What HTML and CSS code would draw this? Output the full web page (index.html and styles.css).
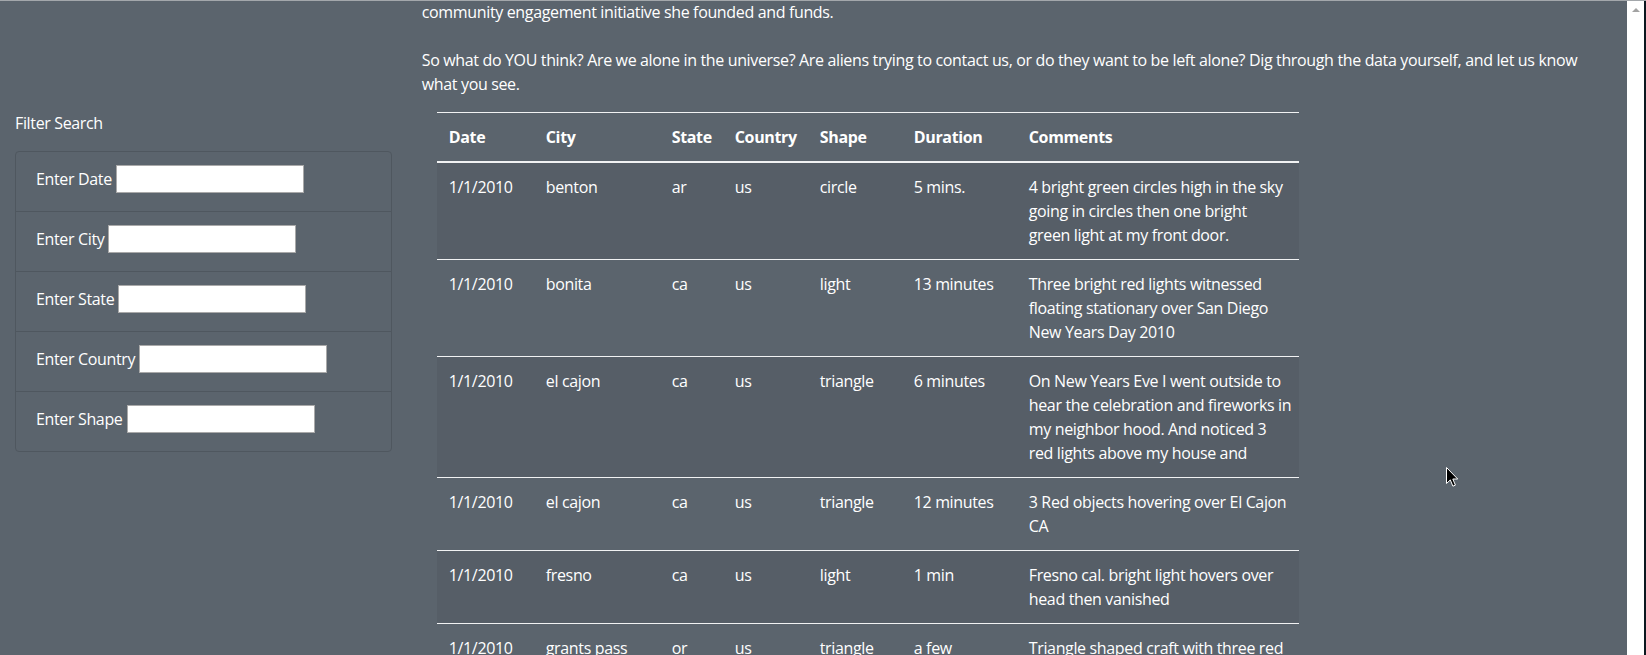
FILE: index.html
```html
<!DOCTYPE html>
<html lang="en">
<head>
<meta charset="utf-8">
<title>UFO Sightings</title>
<link rel="stylesheet" href="styles.css">
</head>
<body>
<div class="frame">
  <div class="viewport">
    <div class="layout">
      <aside class="filters">
        <p class="filters-title">Filter Search</p>
        <ul class="filter-list">
          <li class="filter-item"><label for="datetime">Enter Date</label><input id="datetime" type="text"></li>
          <li class="filter-item"><label for="city">Enter City</label><input id="city" type="text"></li>
          <li class="filter-item"><label for="state">Enter State</label><input id="state" type="text"></li>
          <li class="filter-item"><label for="country">Enter Country</label><input id="country" type="text"></li>
          <li class="filter-item"><label for="shape">Enter Shape</label><input id="shape" type="text"></li>
        </ul>
      </aside>
      <main class="content">
        <p class="intro">community engagement initiative she founded and funds.<br><br>So what do YOU think? Are we alone in the universe? Are aliens trying to contact us, or do they want to be left alone? Dig through the data yourself, and let us know what you see.</p>
        <table class="ufo-table">
          <colgroup>
            <col class="col-date">
            <col class="col-city">
            <col class="col-state">
            <col class="col-country">
            <col class="col-shape">
            <col class="col-duration">
            <col class="col-comments">
          </colgroup>
          <thead>
            <tr>
              <th>Date</th>
              <th>City</th>
              <th>State</th>
              <th>Country</th>
              <th>Shape</th>
              <th>Duration</th>
              <th>Comments</th>
            </tr>
          </thead>
          <tbody>
            <tr>
              <td>1/1/2010</td><td>benton</td><td>ar</td><td>us</td><td>circle</td><td>5 mins.</td>
              <td>4 bright green circles high in the sky<br>going in circles then one bright<br>green light at my front door.</td>
            </tr>
            <tr>
              <td>1/1/2010</td><td>bonita</td><td>ca</td><td>us</td><td>light</td><td>13 minutes</td>
              <td>Three bright red lights witnessed<br>floating stationary over San Diego<br>New Years Day 2010</td>
            </tr>
            <tr>
              <td>1/1/2010</td><td>el cajon</td><td>ca</td><td>us</td><td>triangle</td><td>6 minutes</td>
              <td>On New Years Eve I went outside to<br>hear the celebration and fireworks in<br>my neighbor hood. And noticed 3<br>red lights above my house and</td>
            </tr>
            <tr>
              <td>1/1/2010</td><td>el cajon</td><td>ca</td><td>us</td><td>triangle</td><td>12 minutes</td>
              <td>3 Red objects hovering over El Cajon<br>CA</td>
            </tr>
            <tr>
              <td>1/1/2010</td><td>fresno</td><td>ca</td><td>us</td><td>light</td><td>1 min</td>
              <td>Fresno cal. bright light hovers over<br>head then vanished</td>
            </tr>
            <tr>
              <td>1/1/2010</td><td>grants pass</td><td>or</td><td>us</td><td>triangle</td><td>a few minutes</td>
              <td>Triangle shaped craft with three red<br>lights</td>
            </tr>
          </tbody>
        </table>
      </main>
    </div>
    <svg class="cursor" width="13" height="21" viewBox="0 0 13 21" aria-hidden="true">
      <path d="M0.5 0.5 L0.5 16.5 L4.3 12.9 L6.9 19.2 L9.4 18.1 L6.8 12 L11.7 12 Z" fill="#000" stroke="#fff" stroke-width="1" stroke-linejoin="miter"/>
    </svg>
  </div>
  <div class="scrollbar"><span class="scroll-up"></span></div>
  <div class="edge"></div>
</div>
</body>
</html>
```
FILE: styles.css
```css
html, body {
  margin: 0;
  height: 100%;
}

body {
  background: #5b646d;
  color: #ffffff;
  font-family: "Open Sans", "Noto Sans", "Liberation Sans", sans-serif;
  font-size: 16px;
  line-height: 24px;
  letter-spacing: -0.35px;
  overflow: hidden;
}

.frame {
  position: relative;
  display: flex;
  height: 655px;
}

.frame::before {
  content: "";
  position: absolute;
  left: 0;
  right: 0;
  top: 0;
  height: 1px;
  background: #a3a7ab;
  z-index: 2;
}

.viewport {
  position: relative;
  flex: 1;
  overflow: hidden;
}

.layout {
  display: grid;
  grid-template-columns: 1fr 3fr;
}

.filters {
  padding: 111px 15px 0;
}

.filters-title {
  margin: 0 0 16px;
}

.filter-list {
  list-style: none;
  margin: 0;
  padding: 0;
  border: 1px solid #4f575f;
  border-radius: 4px;
}

.filter-item {
  box-sizing: border-box;
  height: 60px;
  padding: 13px 20px 0;
  display: flex;
  align-items: flex-start;
  column-gap: 4px;
  border-bottom: 1px solid #4f575f;
}

.filter-item:last-child {
  height: 59px;
  border-bottom: 0;
}

.filter-item label {
  line-height: 28px;
}

.filter-item input {
  box-sizing: border-box;
  width: 188px;
  height: 28px;
  margin: 0;
  padding: 1px 3px;
  border: 1px solid #a9a9a9;
  background: #ffffff;
  font: inherit;
}

.content {
  padding: 0 15px;
}

.intro {
  margin: 0 0 16px;
}

.ufo-table {
  width: 862px;
  margin-left: 15px;
  border-collapse: collapse;
  table-layout: fixed;
}

.col-date { width: 97px; }
.col-city { width: 126px; }
.col-state { width: 63px; }
.col-country { width: 85px; }
.col-shape { width: 94px; }
.col-duration { width: 115px; }
.col-comments { width: 282px; }

.ufo-table th,
.ufo-table td {
  padding: 12px;
  text-align: left;
  vertical-align: top;
  border-top: 1px solid #f1f2f3;
}

.ufo-table td:last-child {
  white-space: nowrap;
}

.ufo-table thead th {
  vertical-align: bottom;
  font-weight: 700;
  border-bottom: 2px solid #f1f2f3;
}

.ufo-table tbody tr:nth-child(odd) {
  background: rgba(0, 0, 0, 0.05);
}

.cursor {
  position: absolute;
  left: 1446px;
  top: 467px;
}

.scrollbar {
  width: 17px;
  background: #ffffff;
  display: flex;
  justify-content: center;
  padding-top: 8px;
  box-sizing: border-box;
}

.scroll-up {
  width: 0;
  height: 0;
  border-left: 4px solid transparent;
  border-right: 4px solid transparent;
  border-bottom: 4px solid #a3a3a3;
}

.edge {
  width: 2px;
  background: #0c1820;
}
```
